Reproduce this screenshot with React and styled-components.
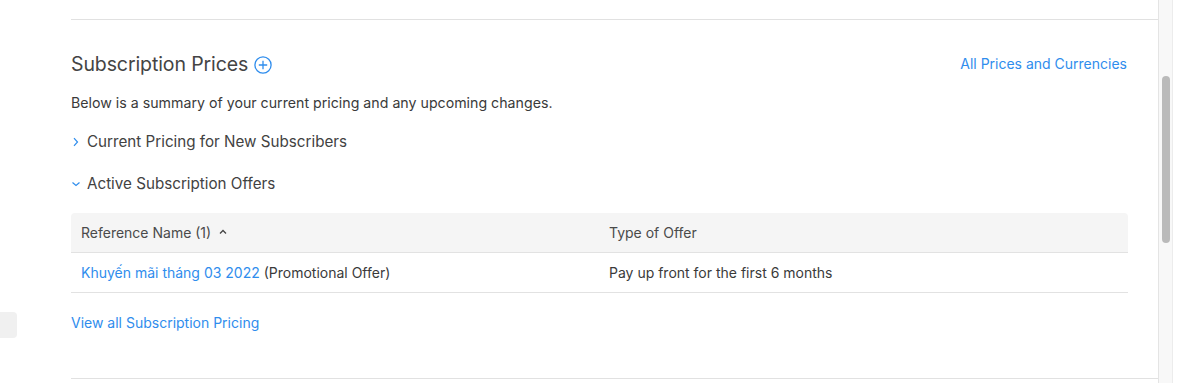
import styled, { createGlobalStyle } from "styled-components";

const GlobalStyle = createGlobalStyle`
  body {
    margin: 0;
    background: #fff;
    font-family: Inter, "Noto Sans", "Liberation Sans", sans-serif;
    color: #333;
    -webkit-font-smoothing: antialiased;
  }
`;

const BLUE = "#2f8ded";

const offers = [
  {
    name: "Khuyến mãi tháng 03 2022",
    kind: "(Promotional Offer)",
    type: "Pay up front for the first 6 months",
  },
];

const App = () => {
  return (
    <>
      <GlobalStyle />
      <Page>
        <Gutter>
          <SideTab />
        </Gutter>

        <Main>
          <Section>
            <HeaderRow>
              <Title>
                Subscription Prices
                <PlusIcon />
              </Title>
              <Link>All Prices and Currencies</Link>
            </HeaderRow>

            <Description>
              Below is a summary of your current pricing and any upcoming changes.
            </Description>

            <Toggle $gap={19}>
              <Chevron open={false} />
              Current Pricing for New Subscribers
            </Toggle>
            <Toggle>
              <Chevron open />
              Active Subscription Offers
            </Toggle>

            <Table>
              <HeadRow>
                <HeadCell>
                  Reference Name (1)
                  <SortCaret />
                </HeadCell>
                <HeadCell>Type of Offer</HeadCell>
              </HeadRow>
              {offers.map((offer) => (
                <Row key={offer.name}>
                  <Cell>
                    <Link>{offer.name}</Link> {offer.kind}
                  </Cell>
                  <Cell>{offer.type}</Cell>
                </Row>
              ))}
            </Table>

            <ViewAll>View all Subscription Pricing</ViewAll>
          </Section>
        </Main>

        <Scrollbar>
          <Thumb />
        </Scrollbar>
        <RightEdge />
      </Page>
    </>
  );
};

const PlusIcon = () => (
  <PlusSvg viewBox="0 0 18 18" width="18" height="18">
    <circle cx="9" cy="9" r="8.1" fill="none" stroke={BLUE} strokeWidth="1.3" />
    <path d="M9 4.8v8.4M4.8 9h8.4" stroke={BLUE} strokeWidth="1.3" />
  </PlusSvg>
);

const Chevron = ({ open }) => (
  <ChevronSvg viewBox="0 0 10 10" width="10" height="10">
    {open ? (
      <path d="M1.5 3.5L5 6.5L8.5 3.5" fill="none" stroke={BLUE} strokeWidth="1.2" />
    ) : (
      <path d="M3 1.2L6.5 5L3 8.8" fill="none" stroke={BLUE} strokeWidth="1.2" />
    )}
  </ChevronSvg>
);

const SortCaret = () => (
  <CaretSvg viewBox="0 0 10 10" width="10" height="10">
    <path d="M2 6.5L5 3.5L8 6.5" fill="none" stroke="#444" strokeWidth="1.3" />
  </CaretSvg>
);

const Page = styled.div`
  display: flex;
  height: 383px;
  overflow: hidden;
`;

const Gutter = styled.div`
  width: 71px;
  flex-shrink: 0;
`;

const SideTab = styled.div`
  margin-top: 312px;
  width: 17px;
  height: 26px;
  background: #f0f0f0;
  border-radius: 0 4px 4px 0;
`;

const Main = styled.div`
  flex: 1;
  padding-top: 19px;
`;

const Section = styled.section`
  border-top: 1px solid #e1e1e1;
  border-bottom: 1px solid #e1e1e1;
  padding: 32px 30px 0 0;
  height: 360px;
  box-sizing: border-box;
`;

const HeaderRow = styled.div`
  display: flex;
  align-items: center;
  justify-content: space-between;
  height: 24px;
  padding-right: 1px;
`;

const Title = styled.h2`
  display: flex;
  align-items: center;
  gap: 6px;
  margin: 0;
  font-size: 19.5px;
  font-weight: 400;
  line-height: 24px;
  color: #444;
  letter-spacing: -0.1px;
`;

const PlusSvg = styled.svg`
  margin-top: 1px;
`;

const Link = styled.a`
  color: ${BLUE};
  font-size: 14px;
  line-height: 18px;
  cursor: pointer;
`;

const Description = styled.p`
  margin: 18px 0 0;
  font-size: 14.2px;
  line-height: 18px;
  color: #3a3a3a;
`;

const Toggle = styled.div`
  display: flex;
  align-items: center;
  gap: 6px;
  margin-top: ${(p) => p.$gap ?? 20}px;
  font-size: 15.2px;
  line-height: 22px;
  color: #424242;
`;

const ChevronSvg = styled.svg`
  flex-shrink: 0;
`;

const Table = styled.div`
  margin-top: 18px;
  font-size: 14px;
  line-height: 18px;
`;

const HeadRow = styled.div`
  display: grid;
  grid-template-columns: 528px 1fr;
  height: 40px;
  box-sizing: border-box;
  background: #f5f5f5;
  border-radius: 4px 4px 0 0;
  border-bottom: 1px solid #e2e2e2;
  align-items: center;
`;

const Row = styled(HeadRow)`
  background: transparent;
  border-radius: 0;
`;

const HeadCell = styled.div`
  display: flex;
  align-items: center;
  gap: 7px;
  padding-left: 10px;
  color: #4a4a4a;
`;

const Cell = styled.div`
  padding-left: 10px;
  color: #3a3a3a;
  white-space: nowrap;
`;

const CaretSvg = styled.svg`
  margin-top: -2px;
`;

const ViewAll = styled(Link)`
  display: block;
  margin-top: 21px;
`;

const Scrollbar = styled.div`
  width: 13px;
  flex-shrink: 0;
  background: #f8f8f8;
  border-left: 1px solid #e4e4e4;
  border-right: 1px solid #ececec;
  padding-top: 76px;
  display: flex;
  justify-content: center;
`;

const Thumb = styled.div`
  width: 8px;
  height: 167px;
  background: #bababa;
  border-radius: 4px;
`;

const RightEdge = styled.div`
  width: 22px;
  flex-shrink: 0;
`;

export default App;
